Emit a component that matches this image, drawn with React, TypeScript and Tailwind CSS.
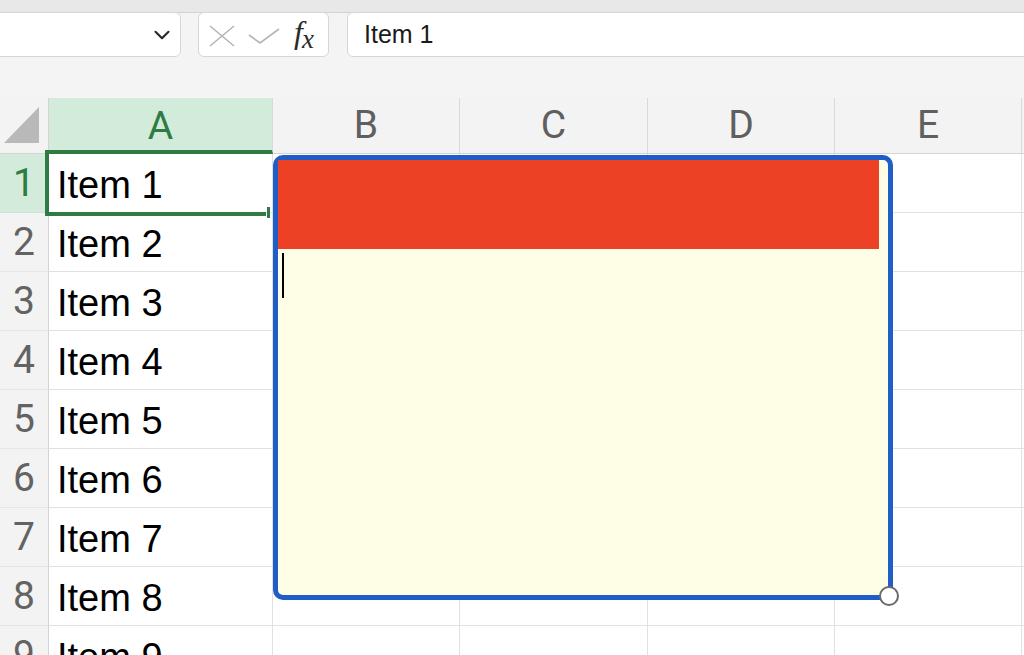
import React from 'react';
import { ChevronDown } from 'lucide-react';

const columns = [
  { label: 'A', width: 'w-[224px]', active: true },
  { label: 'B', width: 'w-[187px]', active: false },
  { label: 'C', width: 'w-[188px]', active: false },
  { label: 'D', width: 'w-[187px]', active: false },
  { label: 'E', width: 'w-[187px]', active: false },
  { label: '', width: 'w-[60px]', active: false },
];

const rows = [1, 2, 3, 4, 5, 6, 7, 8, 9];

function CornerCell() {
  return (
    <div className="w-[49px] shrink-0 border-r border-b border-[#d4d4d4] bg-[#f3f3f3] flex items-end justify-start pb-[10px] pl-[4px]">
      <svg width="35" height="36" viewBox="0 0 35 36">
        <polygon points="35,0 35,36 0,36" fill="#b9b9b9" />
      </svg>
    </div>
  );
}

function ColumnHeader({ label, width, active }: { label: string; width: string; active: boolean }) {
  return (
    <div
      className={
        active
          ? `${width} shrink-0 flex items-center justify-center bg-[#d3ebdb] border-r border-[#d9d9d9] border-b-[4px] border-b-[#2e7b43] pt-[4px]`
          : `${width} shrink-0 flex items-center justify-center border-r border-[#d9d9d9] border-b border-b-[#d4d4d4]`
      }
    >
      <span
        className={
          active
            ? "font-['Roboto',sans-serif] text-[39px] leading-none text-[#2e7b43]"
            : "font-['Roboto',sans-serif] text-[39px] leading-none text-[#5f5f5f]"
        }
      >
        {label}
      </span>
    </div>
  );
}

function SheetRow({ n }: { n: number }) {
  const active = n === 1;
  return (
    <div className="flex h-[59px] shrink-0">
      <div
        className={
          active
            ? 'w-[49px] shrink-0 flex items-center justify-center bg-[#d3ebdb] border-r border-[#d4d4d4] border-b border-b-[#cfe3d5]'
            : 'w-[49px] shrink-0 flex items-center justify-center bg-[#f3f3f3] border-r border-[#d4d4d4] border-b border-b-[#e6e6e6]'
        }
      >
        <span
          className={
            active
              ? "font-['Roboto',sans-serif] text-[39px] leading-none text-[#2e7b43]"
              : "font-['Roboto',sans-serif] text-[39px] leading-none text-[#636363]"
          }
        >
          {n}
        </span>
      </div>
      {columns.map((col, i) => (
        <div
          key={i}
          className={`${col.width} shrink-0 border-r border-b border-[#e1e1e1] flex items-center pl-[8px] pt-[3px] overflow-hidden`}
        >
          {i === 0 && (
            <span className="font-['Liberation_Sans',Arial,sans-serif] text-[38px] leading-none text-black whitespace-nowrap">
              Item {n}
            </span>
          )}
        </div>
      ))}
    </div>
  );
}

export default function App() {
  return (
    <div className="relative w-[1024px] h-[655px] overflow-hidden bg-white font-['Liberation_Sans',Arial,sans-serif]">
      {/* window top strip */}
      <div className="h-[13px] bg-[#e8e8e8] border-b border-[#d3d3d3]" />

      {/* formula bar */}
      <div className="h-[85px] bg-[#f4f4f4] flex items-start">
        <div className="-ml-[12px] w-[193px] h-[45px] -mt-[1px] shrink-0 bg-white border border-[#d6d6d6] rounded-[6px] flex items-center justify-end pr-[5px]">
          <ChevronDown size={26} strokeWidth={1.9} color="#262626" />
        </div>
        <div className="ml-[17px] w-[131px] h-[45px] -mt-[1px] shrink-0 bg-white border border-[#d6d6d6] rounded-[6px] flex items-center pl-[10px]">
          <svg width="26" height="22" viewBox="0 0 26 22" className="mt-[2px]">
            <path d="M1 1 L25 21 M25 1 L1 21" stroke="#b4b4b4" strokeWidth="1.6" fill="none" />
          </svg>
          <svg width="32" height="16" viewBox="0 0 32 16" className="ml-[13px] mt-[3px]">
            <path d="M1 7 L12 15 L31 1" stroke="#b4b4b4" strokeWidth="1.6" fill="none" />
          </svg>
          <span className="ml-[14px] font-['Liberation_Serif',serif] italic text-[32px] leading-none text-[#2a2a2a] -mt-[6px]">
            f<span className="text-[27px] relative top-[5px] -ml-[1px]">x</span>
          </span>
        </div>
        <div className="ml-[18px] flex-1 -mr-[20px] h-[45px] -mt-[1px] bg-white border border-[#d6d6d6] rounded-[6px] flex items-center pl-[16px]">
          <span className="text-[25px] leading-none text-[#1a1a1a]">Item 1</span>
        </div>
      </div>

      {/* sheet */}
      <div className="relative flex flex-col">
        <div className="flex h-[56px] shrink-0 bg-[#f3f3f3]">
          <CornerCell />
          {columns.map((col, i) => (
            <ColumnHeader key={i} {...col} />
          ))}
        </div>
        {rows.map((n) => (
          <SheetRow key={n} n={n} />
        ))}

        {/* active cell selection */}
        <div className="absolute left-[45px] top-[52px] w-[221px] h-[66px] border-l-[4px] border-b-[4px] border-[#2e7b43]" />
        <div className="absolute left-[267px] top-[109px] w-[3px] h-[11px] bg-[#2e7b43]" />

        {/* text box shape */}
        <div className="absolute left-[273px] top-[57px] w-[620px] h-[445px] border-[5px] border-[#1f5ec6] rounded-[10px] bg-[#fefee6] flex flex-col">
          <div className="h-[89px] mr-[9px] bg-[#ec4124]" />
          <div className="w-[2px] h-[45px] ml-[4px] mt-[4px] bg-black" />
        </div>
        <div className="absolute left-[879px] top-[488px] w-[20px] h-[20px] rounded-full border-[2px] border-[#6a6a6a] bg-white" />
      </div>
    </div>
  );
}
